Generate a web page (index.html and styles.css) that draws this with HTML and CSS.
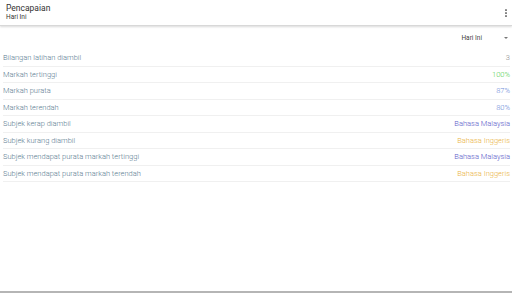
FILE: index.html
```html
<!DOCTYPE html>
<html lang="ms">
<head>
<meta charset="UTF-8">
<meta name="viewport" content="width=device-width, initial-scale=1.0">
<title>Pencapaian</title>
<link rel="stylesheet" href="styles.css">
</head>
<body class="page">
  <div class="appbar">
    <div class="titles">
      <div class="title">Pencapaian</div>
      <div class="subtitle">Hari Ini</div>
    </div>
    <svg class="more" width="4" height="10" viewBox="0 0 4 10">
      <circle cx="2" cy="2" r="0.85" fill="#222"/>
      <circle cx="2" cy="5" r="0.85" fill="#222"/>
      <circle cx="2" cy="8" r="0.85" fill="#222"/>
    </svg>
  </div>
  <div class="filter">
    <div class="select">
      <span class="select-text">Hari Ini</span>
      <span class="arrow"></span>
    </div>
  </div>
  <div class="list">
    <div class="row"><span class="label">Bilangan latihan diambil</span><span class="value gray">3</span></div>
    <div class="row"><span class="label">Markah tertinggi</span><span class="value green">100%</span></div>
    <div class="row"><span class="label">Markah purata</span><span class="value blue">87%</span></div>
    <div class="row"><span class="label">Markah terendah</span><span class="value blue">80%</span></div>
    <div class="row"><span class="label">Subjek kerap diambil</span><span class="value purple">Bahasa Malaysia</span></div>
    <div class="row"><span class="label">Subjek kurang diambil</span><span class="value orange">Bahasa Inggeris</span></div>
    <div class="row"><span class="label">Subjek mendapat purata markah tertinggi</span><span class="value purple">Bahasa Malaysia</span></div>
    <div class="row"><span class="label">Subjek mendapat purata markah terendah</span><span class="value orange">Bahasa Inggeris</span></div>
  </div>
  <div class="spacer"></div>
  <div class="bottom-line"></div>
</body>
</html>
```

FILE: styles.css
```css
html, body {
  height: 100%;
}
.page {
  margin: 0;
  background: #fff;
  font-family: Roboto, "Liberation Sans", sans-serif;
  display: flex;
  flex-direction: column;
}
.appbar {
  height: 25px;
  display: flex;
  align-items: center;
  justify-content: space-between;
  padding: 0 4px 0 6px;
  border-bottom: 1px solid #d8d8d8;
  box-shadow: 0 1px 2px rgba(0, 0, 0, 0.15);
}
.title {
  font-size: 8.5px;
  color: #333;
  line-height: 10px;
}
.subtitle {
  font-size: 6.5px;
  color: #333;
  line-height: 9px;
}
.filter {
  display: flex;
  justify-content: flex-end;
  padding: 7px 2px 0 0;
  height: 17px;
}
.select {
  display: flex;
  align-items: center;
  height: 10px;
}
.select-text {
  font-size: 6.5px;
  color: #444;
  margin-right: 22px;
}
.arrow {
  width: 0;
  height: 0;
  border-left: 2px solid transparent;
  border-right: 2px solid transparent;
  border-top: 2px solid #777;
  margin-right: 2px;
}
.list {
  padding: 0 2px 0 3px;
}
.row {
  height: 16.5px;
  display: flex;
  align-items: center;
  justify-content: space-between;
  border-bottom: 1px solid #f0f0f0;
  box-sizing: border-box;
  font-size: 7.5px;
  font-weight: 300;
}
.label {
  color: #5a7b90;
}
.gray { color: #888; }
.green { color: #55d055; }
.blue { color: #6a8ad8; }
.purple { color: #5858c8; }
.orange { color: #eab23c; }
.spacer {
  flex: 1;
}
.bottom-line {
  height: 2px;
  background: #b5b5b5;
}
```
